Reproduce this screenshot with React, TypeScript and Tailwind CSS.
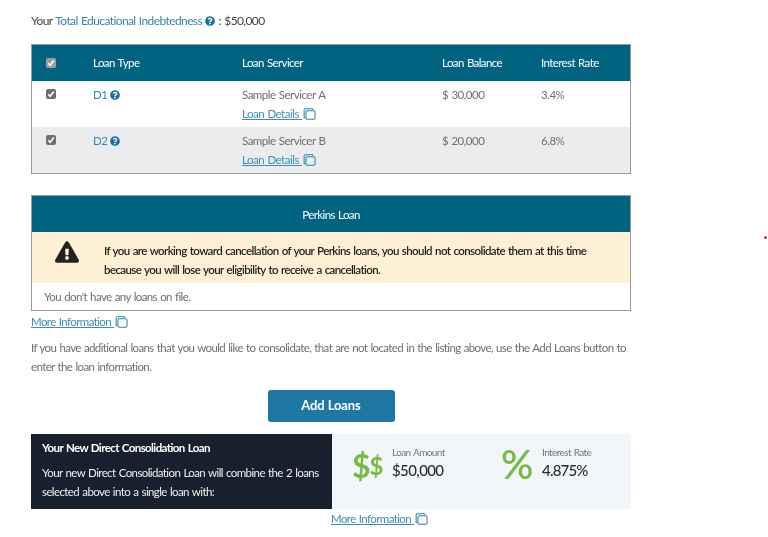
import React from "react";
import { FaQuestionCircle, FaExclamationTriangle } from "react-icons/fa";

function CopyIcon() {
  return (
    <svg width="13" height="12" viewBox="0 0 14 13" fill="none" stroke="#2a82ad" strokeWidth="1.1" className="inline-block ml-[1px] align-[-2px]">
      <path d="M2.5 10.5H1.2V2.2Q1.2 .8 2.6 .8H10.5V2" />
      <rect x="3.2" y="3" width="9.8" height="9.2" rx="1.3" />
    </svg>
  );
}

function Check({ light }: { light?: boolean }) {
  return (
    <span className={`w-[10px] h-[10px] rounded-[2px] flex items-center justify-center ${light ? "bg-[#9c9ea0]" : "bg-[#6e6e6e]"}`}>
      <svg width="8" height="8" viewBox="0 0 8 8" fill="none" stroke="#fff" strokeWidth="1.6"><path d="M1.2 4.2 3.2 6.2 6.8 1.6" /></svg>
    </span>
  );
}

function DetailLink({ label }: { label: string }) {
  return (
    <a className="block text-[#3a8fb8] text-[11.5px] leading-[19px] whitespace-nowrap">
      <span className="underline">{label}&nbsp;</span>
      <CopyIcon />
    </a>
  );
}

function LoanRow({ id, servicer, balance, rate, shaded }: { id: string; servicer: string; balance: string; rate: string; shaded?: boolean }) {
  return (
    <div className={`grid grid-cols-[61px_149px_200px_99px_1fr] h-[46px] pt-[4px] text-[11.5px] leading-[19px] text-[#6f6f6f] tracking-[-0.5px] ${shaded ? "bg-[#ebecee]" : "bg-white"}`}>
      <div className="pl-[14px] pt-[4px]"><Check /></div>
      <div className="flex items-start gap-[3px] text-[#3a84ad]">
        <span>{id}</span>
        <FaQuestionCircle className="w-[10px] h-[10px] mt-[5px] text-[#1f6f9c]" />
      </div>
      <div className="flex flex-col">
        <span>{servicer}</span>
        <DetailLink label="Loan Details" />
      </div>
      <div>{balance}</div>
      <div>{rate}</div>
    </div>
  );
}

export default function App() {
  return (
    <div className="relative w-[768px] h-[537px] bg-white overflow-hidden pl-[31px] pt-[12px] font-['Lato',sans-serif] tracking-[-0.6px] [word-spacing:0.8px] blur-[0.35px]">
      <span className="absolute left-[764px] top-[236px] w-[3px] h-[3px] rounded-full bg-[#d9363e]" />
      <div className="w-[600px]">
        <p className="h-[32px] text-[12px] leading-[18px] text-[#444]">
          Your <span className="text-[#3a84ad]">Total Educational Indebtedness</span>{" "}
          <FaQuestionCircle className="inline w-[10px] h-[10px] text-[#1f6f9c] align-[-1px]" /> : $50,000
        </p>

        <div className="border border-[#999]">
          <div className="grid grid-cols-[61px_149px_200px_99px_1fr] h-[36px] items-center bg-[#00637f] text-white text-[11.5px]">
            <div className="pl-[14px]"><Check light /></div>
            <div>Loan Type</div>
            <div>Loan Servicer</div>
            <div>Loan Balance</div>
            <div>Interest Rate</div>
          </div>
          <LoanRow id="D1" servicer="Sample Servicer A" balance="$ 30,000" rate="3.4%" />
          <LoanRow id="D2" servicer="Sample Servicer B" balance="$ 20,000" rate="6.8%" shaded />
        </div>

        <div className="mt-[21px] border border-[#999]">
          <div className="h-[36px] pt-[1px] flex items-center justify-center bg-[#00637f] text-white text-[11.5px]">Perkins Loan</div>
          <div className="h-[51px] flex items-start pt-[9px] bg-[#fdf0d5] text-[#222] text-[11.5px] leading-[19px] font-semibold tracking-[-0.6px]">
            <div className="w-[72px] flex justify-center shrink-0"><FaExclamationTriangle className="w-[24px] h-[22px] text-[#222] mr-[2px]" /></div>
            <div className="whitespace-nowrap">
              If you are working toward cancellation of your Perkins loans, you should not consolidate them at this time<br />
              because you will lose your eligibility to receive a cancellation.
            </div>
          </div>
          <div className="h-[27px] flex items-center pl-[12px] text-[11.5px] text-[#6f6f6f]">You don't have any loans on file.</div>
        </div>

        <div className="h-[19px] mt-[1px]"><DetailLink label="More Information" /></div>

        <p className="mt-[7px] text-[11.5px] leading-[19px] text-[#6f6f6f] whitespace-nowrap tracking-[-0.62px]">
          If you have additional loans that you would like to consolidate, that are not located in the listing above, use the Add Loans button to<br />
          enter the loan information.
        </p>

        <div className="mt-[14px] flex justify-center">
          <button className="w-[127px] h-[32px] rounded-[3px] bg-[#1f78a4] text-white text-[13px] font-bold tracking-[-0.1px]">Add Loans</button>
        </div>

        <div className="mt-[12px] flex h-[75px]">
          <div className="w-[301px] bg-[#17212e] text-white px-[11px] pt-[4px] text-[11.5px] leading-[19px]">
            <div className="font-bold">Your New Direct Consolidation Loan</div>
            <div className="mt-[6px] text-[#eee] whitespace-nowrap">Your new Direct Consolidation Loan will combine the 2 loans<br />selected above into a single loan with:</div>
          </div>
          <div className="flex-1 bg-[#f2f5f9] flex items-start pl-[20px] pt-[11px]">
            <div className="w-[149px] flex items-start">
              <div className="w-[40px] h-[40px] text-[#76bc43] font-bold whitespace-nowrap tracking-[-1px] flex items-end leading-[38px]">
                <span className="text-[32px]">$</span><span className="text-[24px]">$</span>
              </div>
              <div>
                <div className="text-[10px] leading-[14px] text-[#777]">Loan Amount</div>
                <div className="text-[15px] leading-[22px] text-[#2a2f38] font-medium">$50,000</div>
              </div>
            </div>
            <div className="flex items-start">
              <div className="w-[41px] h-[40px] text-[#76bc43] text-[40px] leading-[38px] tracking-normal font-semibold">%</div>
              <div>
                <div className="text-[10px] leading-[14px] text-[#777]">Interest Rate</div>
                <div className="text-[15px] leading-[22px] text-[#2a2f38] font-medium tracking-[-0.8px]">4.875%</div>
              </div>
            </div>
          </div>
        </div>

        <div className="pl-[300px]"><DetailLink label="More Information" /></div>
      </div>
    </div>
  );
}
